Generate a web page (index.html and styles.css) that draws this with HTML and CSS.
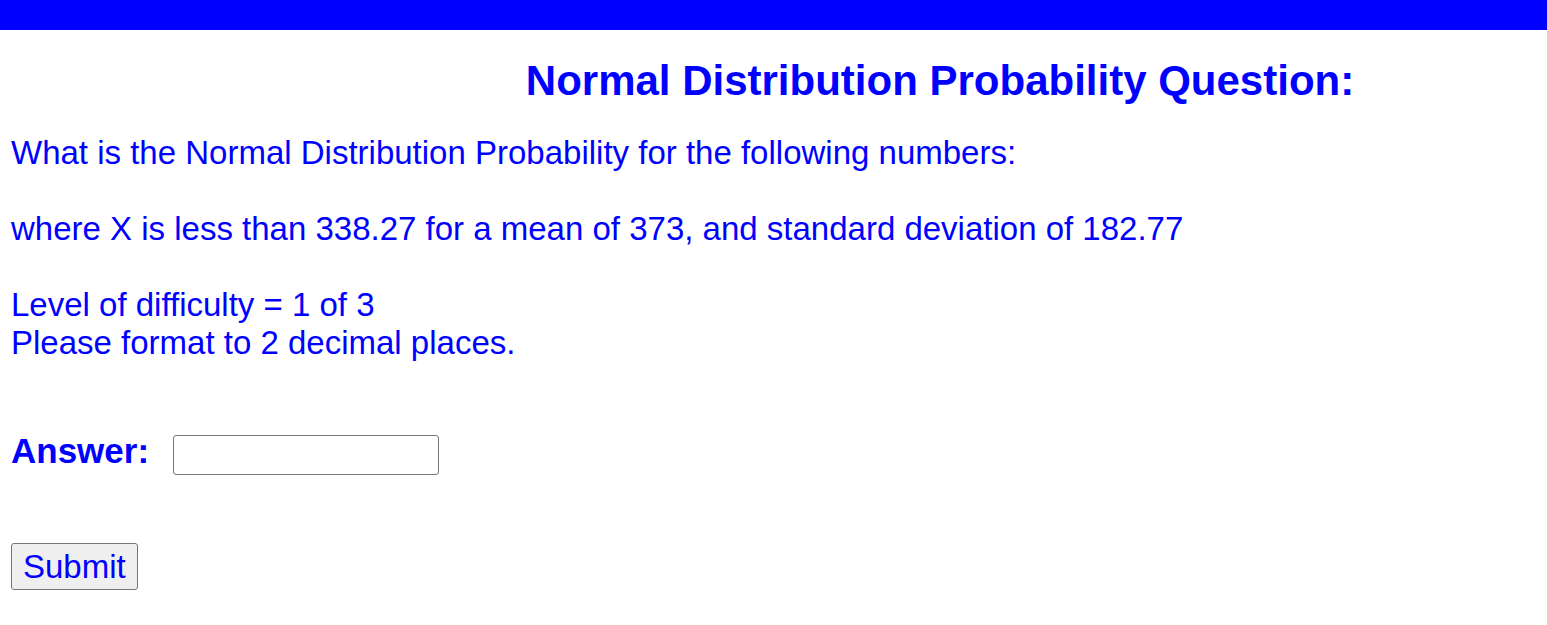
FILE: index.html
```html
<!DOCTYPE html>
<html lang="en">
<head>
<meta charset="utf-8">
<title>Normal Distribution Probability Question</title>
<link rel="stylesheet" href="styles.css">
</head>
<body>
<div class="topbar"></div>
<h1 class="title">Normal Distribution Probability Question:</h1>
<div class="content">
  <p class="question">What is the Normal Distribution Probability for the following numbers:<br><br>where X is less than 338.27 for a mean of 373, and standard deviation of 182.77<br><br>Level of difficulty = 1 of 3<br>Please format to 2 decimal places.</p>
  <form class="answer-form" onsubmit="return false;">
    <div class="answer-row">
      <label class="answer-label" for="answer">Answer:</label>
      <input class="answer-input" id="answer" type="text">
    </div>
    <button class="submit-btn" type="submit">Submit</button>
  </form>
</div>
</body>
</html>
```

FILE: styles.css
```css
html, body {
  margin: 0;
  padding: 0;
  background: #ffffff;
}

body {
  font-family: "Liberation Sans", Arial, sans-serif;
  color: #0000ff;
}

.topbar {
  height: 30px;
  background: #0000ff;
}

.title {
  margin: 27px 0 0 0;
  padding-left: 333px;
  text-align: center;
  font-size: 42px;
  font-weight: bold;
  line-height: 48px;
}

.content {
  padding: 0 11px;
}

.question {
  margin: 29px 0 0 0;
  font-size: 33px;
  line-height: 38px;
}

.answer-form {
  margin: 0;
}

.answer-row {
  display: flex;
  align-items: flex-start;
  margin-top: 69px;
}

.answer-label {
  font-size: 35px;
  font-weight: bold;
  line-height: 39px;
}

.answer-input {
  box-sizing: border-box;
  width: 266px;
  height: 40px;
  margin: 4px 0 0 24px;
  border: 1px solid #767676;
  border-radius: 3px;
  background: #ffffff;
  padding: 0 4px;
  font-family: "Liberation Sans", Arial, sans-serif;
  font-size: 20px;
}

.submit-btn {
  display: block;
  box-sizing: border-box;
  height: 47px;
  margin-top: 68px;
  padding: 0 11px;
  border: 1px solid #767676;
  border-radius: 3px;
  background: #efefef;
  color: #0000ff;
  font-family: "Liberation Sans", Arial, sans-serif;
  font-size: 33px;
  line-height: 38px;
}
```
